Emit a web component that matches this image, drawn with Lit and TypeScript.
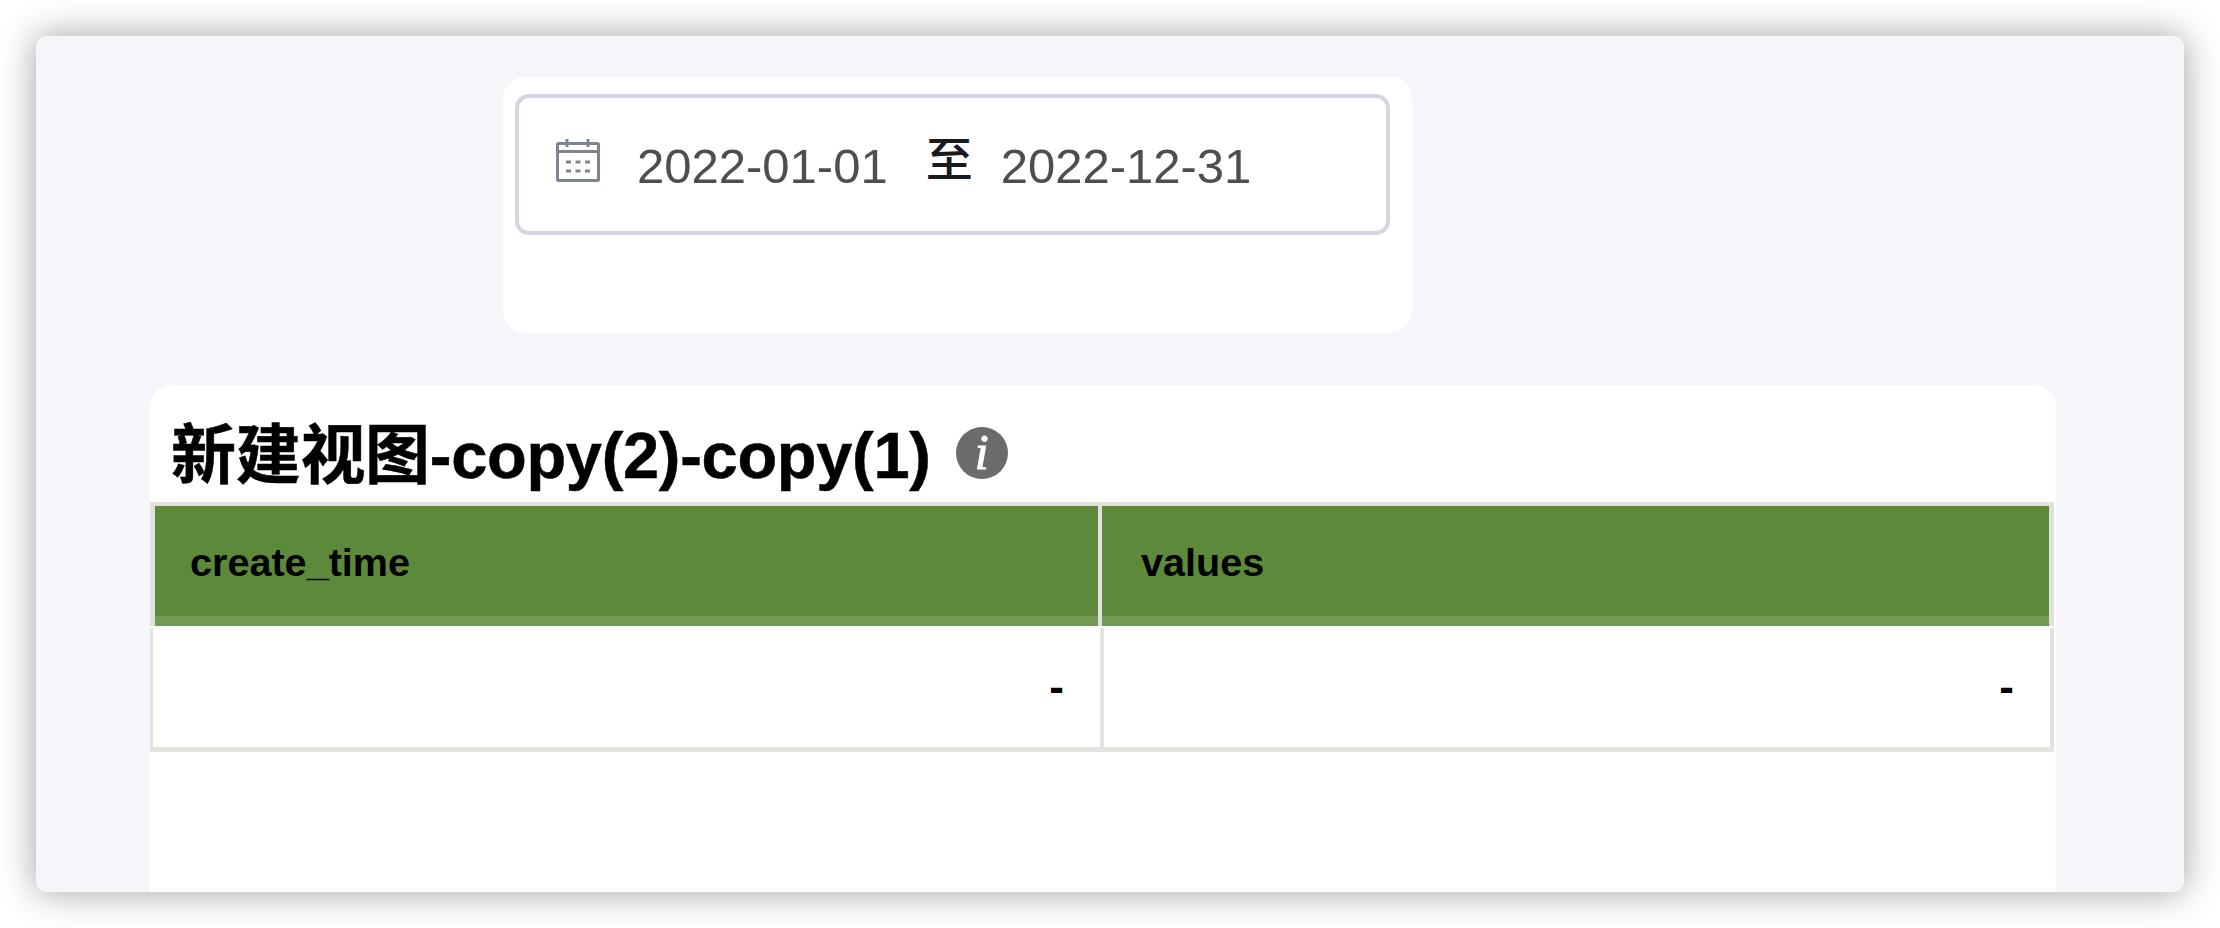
import { LitElement, html, css } from 'lit';
import { customElement } from 'lit/decorators.js';

const SANS = css`"Liberation Sans", "Noto Sans CJK SC", sans-serif`;

@customElement('app-root')
export class AppRoot extends LitElement {
  static styles = css`
    :host {
      display: block;
      width: 2220px;
      height: 928px;
      overflow: hidden;
      background: #fff;
      font-family: ${SANS};
    }
    .stage { padding: 36px; height: 856px; }
    .window {
      height: 856px;
      box-sizing: border-box;
      border-radius: 10px;
      background: #f4f6fa;
      box-shadow: 0 0 36px rgba(0, 0, 0, 0.38);
      padding: 41px 128px 0 114px;
      overflow: hidden;
    }
    .date-card {
      width: 909px;
      height: 256px;
      box-sizing: border-box;
      margin-left: 353px;
      padding: 17px 22px 0 12px;
      background: #fff;
      border-radius: 22px;
    }
    .range {
      height: 141px;
      box-sizing: border-box;
      display: flex;
      align-items: flex-start;
      border: 4px solid #d4d6e1;
      border-radius: 14px;
      padding-top: 40px;
      padding-left: 37px;
      color: #4d4e52;
      font-size: 49px;
      line-height: 56px;
    }
    .cal { width: 44px; height: 44px; flex: none; margin: 1px 37px 0 0; }
    .sep { color: #1a1a1c; font-size: 47px; font-weight: 500; margin: -6px 28px 0 38px; }
    .panel {
      margin-top: 52px;
      height: 520px;
      background: #fff;
      border-radius: 22px 22px 0 0;
    }
    .title {
      display: flex;
      align-items: center;
      height: 117px;
      box-sizing: border-box;
      padding: 13px 0 0 21px;
      font-size: 65px;
      font-weight: 700;
      letter-spacing: -0.3px;
      -webkit-text-stroke: 0.5px #000;
      color: #000;
      white-space: nowrap;
    }
    .info {
      display: flex;
      justify-content: center;
      flex: none;
      width: 52px;
      height: 52px;
      margin: 6px 0 0 25px;
      border-radius: 50%;
      background: #6b6b6b;
      color: #fff;
      font-family: "Liberation Serif", serif;
      font-size: 50px;
      font-style: italic;
      font-weight: 400;
      line-height: 50px;
      letter-spacing: 0;
      -webkit-text-stroke: 1px #fff;
    }
    .head {
      display: grid;
      grid-template-columns: 943px 1fr;
      column-gap: 4px;
      width: 1904px;
      box-sizing: border-box;
      padding: 4px 5px 0;
      background: #e0e1dc;
    }
    .th {
      height: 120px;
      box-sizing: border-box;
      padding: 35px 0 0 35px;
      background: #5d8a3a;
      border-bottom: 10px solid #729a56;
      font-size: 39.6px;
      font-weight: 700;
      line-height: 42px;
      color: #000;
    }
    .th + .th { padding-left: 39px; }
    .row {
      display: grid;
      grid-template-columns: 951px 1fr;
      width: 1904px;
      height: 124px;
      box-sizing: border-box;
      margin-top: 2px;
      border-bottom: 5px solid #e3e4e0;
      border-left: 3px solid #e3e4e0;
    }
    .td {
      border-right: 4px solid #e3e4e0;
      text-align: right;
      font-size: 44px;
      font-weight: 700;
      line-height: 118px;
      padding-right: 36px;
      color: #000;
    }
  `;

  render() {
    return html`
      <div class="stage">
        <div class="window">
          <div class="date-card">
            <div class="range">
              <svg class="cal" viewBox="0 0 44 44" fill="none" stroke="#7f858e" stroke-width="3">
                <rect x="1.5" y="4.5" width="41" height="37" rx="1" />
                <path d="M1.5 12.5h41M11 0v8M32 0v8" />
                <path d="M10 23h24M10 32h24" stroke-dasharray="5 4.5" />
              </svg>
              <span>2022-01-01</span><span class="sep">至</span><span>2022-12-31</span>
            </div>
          </div>
          <div class="panel">
            <div class="title">
              <span>新建视图-copy(2)-copy(1)</span>
              <span class="info">i</span>
            </div>
            <div class="head">
              <div class="th">create_time</div>
              <div class="th">values</div>
            </div>
            <div class="row">
              <div class="td">-</div>
              <div class="td">-</div>
            </div>
          </div>
        </div>
      </div>
    `;
  }
}
